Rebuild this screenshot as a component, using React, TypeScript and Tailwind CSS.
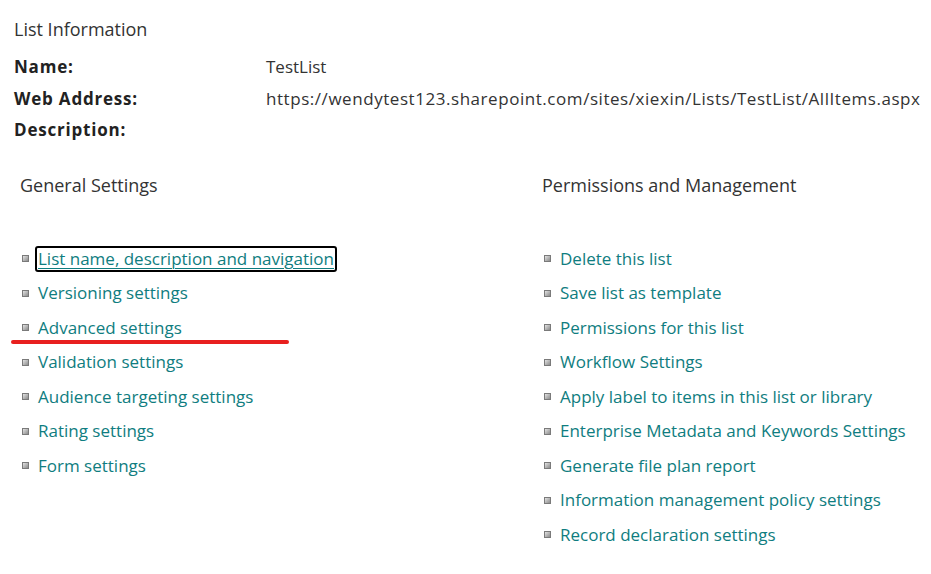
import React from 'react'

const general = [
  'List name, description and navigation',
  'Versioning settings',
  'Advanced settings',
  'Validation settings',
  'Audience targeting settings',
  'Rating settings',
  'Form settings',
]

const perms = [
  'Delete this list',
  'Save list as template',
  'Permissions for this list',
  'Workflow Settings',
  'Apply label to items in this list or library',
  'Enterprise Metadata and Keywords Settings',
  'Generate file plan report',
  'Information management policy settings',
  'Record declaration settings',
]

function Bullet() {
  return (
    <span className="inline-block w-[7px] h-[7px] shrink-0 border border-[#7a7a7a] bg-gradient-to-br from-[#e4e4e4] to-[#8c8c8c]" />
  )
}

function LinkRow({ label, focused, marked }: { label: string; focused?: boolean; marked?: boolean }) {
  return (
    <li className="relative flex items-center h-[34.5px]">
      <Bullet />
      <a
        href="#"
        className={
          focused
            ? 'ml-[6px] text-[#0f7d80] underline underline-offset-[3px] decoration-1 border-2 border-black rounded-[3px] px-[1px] leading-[22px]'
            : 'ml-[9px] text-[#0f7d80] leading-[22px]'
        }
      >
        {label}
      </a>
      {marked && (
        <span className="absolute left-[-11px] top-[29px] w-[278px] h-[4px] rounded-full bg-[#e8201f]" />
      )}
    </li>
  )
}

export default function App() {
  return (
    <div className="w-[931px] h-[574px] bg-white text-[#333333] font-['Open_Sans',sans-serif] text-[17px] overflow-hidden">
      <div className="pl-[14px] pt-[16px]">
        <div className="text-[18px] leading-[26px] text-[#333]">List Information</div>
        <div className="mt-[9px] grid grid-cols-[252px_1fr] auto-rows-[31.5px] items-center">
          <div className="font-bold text-[#222] tracking-[0.8px]">Name:</div>
          <div>TestList</div>
          <div className="font-bold text-[#222] tracking-[0.8px]">Web Address:</div>
          <div className="tracking-[0.55px]">https://wendytest123.sharepoint.com/sites/xiexin/Lists/TestList/AllItems.aspx</div>
          <div className="font-bold text-[#222] tracking-[0.8px]">Description:</div>
          <div></div>
        </div>
      </div>

      <div className="mt-[26px] grid grid-cols-[522px_1fr] pl-[20px]">
        <div>
          <div className="text-[18px] leading-[26px] text-[#333]">General Settings</div>
          <ul className="mt-[44px] pl-[2px]">
            {general.map((g, i) => (
              <LinkRow key={g} label={g} focused={i === 0} marked={i === 2} />
            ))}
          </ul>
        </div>
        <div>
          <div className="text-[18px] leading-[26px] text-[#333]">Permissions and Management</div>
          <ul className="mt-[44px] pl-[2px]">
            {perms.map((p) => (
              <LinkRow key={p} label={p} />
            ))}
          </ul>
        </div>
      </div>
    </div>
  )
}
